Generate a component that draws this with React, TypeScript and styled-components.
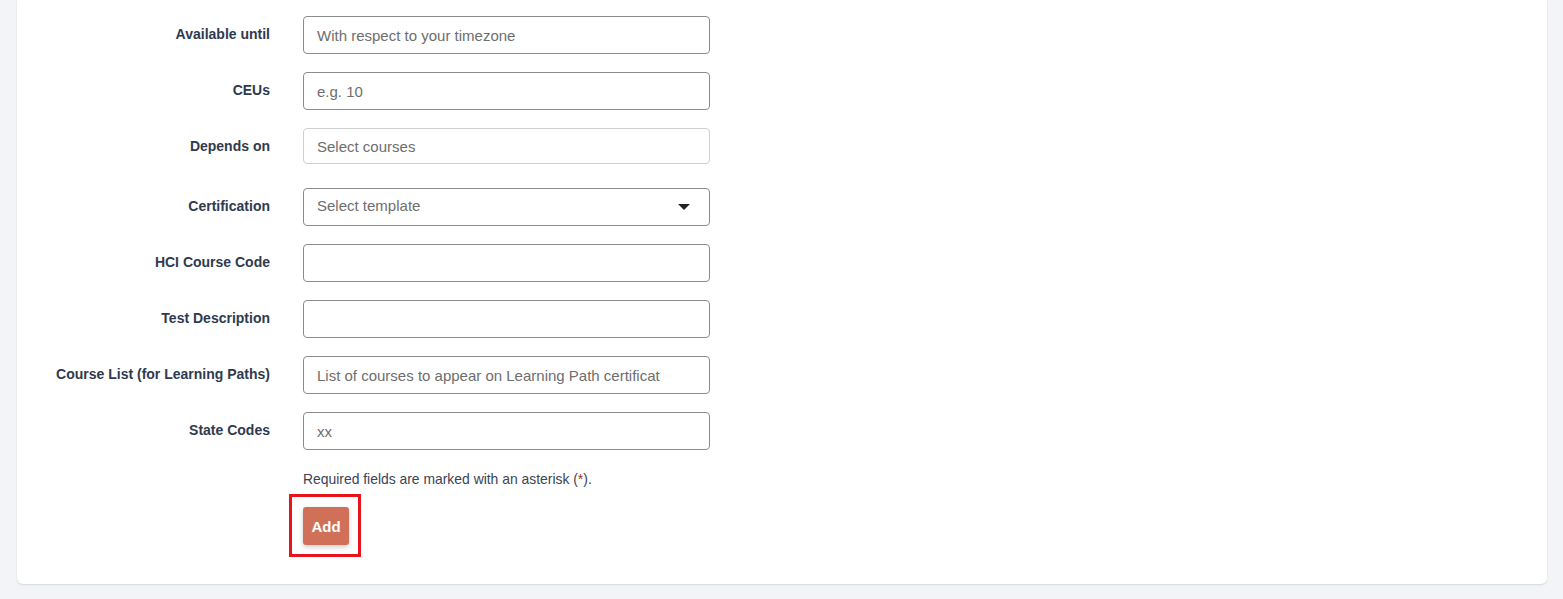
import React from "react";
import styled, { createGlobalStyle } from "styled-components";

const GlobalStyle = createGlobalStyle`
  html, body {
    margin: 0;
    padding: 0;
    background: #f3f4f8;
    font-family: "Liberation Sans", Arial, sans-serif;
  }
  * { box-sizing: border-box; }
`;

const Page = styled.div`
  padding: 0 16px 15px 17px;
`;

const Card = styled.div`
  background: #ffffff;
  border-radius: 0 0 6px 6px;
  box-shadow: 0 1px 2px rgba(0, 0, 0, 0.12);
  padding: 16px 0 39px 0;
`;

const Form = styled.form`
  display: grid;
  grid-template-columns: 253px 407px;
  column-gap: 33px;
`;

const Label = styled.label<{ $pad: number; $gap: number }>`
  text-align: right;
  font-size: 14px;
  font-weight: 700;
  line-height: 20px;
  color: #2f3a4f;
  padding-top: ${(p) => p.$pad}px;
  margin-bottom: ${(p) => p.$gap}px;
`;

const Field = styled.div<{ $gap: number }>`
  margin-bottom: ${(p) => p.$gap}px;
  position: relative;
`;

const TextInput = styled.input<{ $soft?: boolean }>`
  display: block;
  width: 100%;
  height: ${(p) => (p.$soft ? 36 : 38)}px;
  border: 1px solid ${(p) => (p.$soft ? "#cfcfcf" : "#8c8c8c")};
  border-radius: 4px;
  padding: 0 13px;
  font-family: "Liberation Sans", Arial, sans-serif;
  font-size: 15px;
  color: #333;
  background: #fff;
  outline: none;
  &::placeholder {
    color: #6e6e6e;
  }
`;

const SelectBox = styled.div`
  display: flex;
  align-items: center;
  justify-content: space-between;
  height: 38px;
  border: 1px solid #8c8c8c;
  border-radius: 4px;
  padding: 0 19px 2px 13px;
  font-size: 15px;
  line-height: 18px;
  color: #6e6e6e;
  background: #fff;
`;

const Caret = styled.span`
  width: 0;
  height: 0;
  margin-top: 2px;
  border-left: 6px solid transparent;
  border-right: 6px solid transparent;
  border-top: 6px solid #222;
`;

const Note = styled.p`
  grid-column: 2;
  margin: 1px 0 18px 0;
  font-size: 13.9px;
  line-height: 20px;
  color: #3a4456;
`;

const Star = styled.span`
  color: #9a2f1f;
`;

const ButtonCell = styled.div`
  grid-column: 2;
`;

const AddButton = styled.button`
  position: relative;
  width: 46px;
  height: 38px;
  padding: 0;
  border: none;
  border-radius: 3px;
  background: #d07059;
  color: #fff;
  font-family: "Liberation Sans", Arial, sans-serif;
  font-size: 15px;
  font-weight: 700;
  box-shadow: 0 2px 5px rgba(0, 0, 0, 0.2);
  cursor: pointer;
  &::after {
    content: "";
    position: absolute;
    top: -13px;
    bottom: -12px;
    left: -14px;
    right: -12px;
    border: 3px solid #e8141c;
    pointer-events: none;
  }
`;

type Row = {
  label: string;
  placeholder?: string;
  kind?: "text" | "soft" | "select";
};

const rows: Row[] = [
  { label: "Available until", placeholder: "With respect to your timezone" },
  { label: "CEUs", placeholder: "e.g. 10" },
  { label: "Depends on", placeholder: "Select courses", kind: "soft" },
  { label: "Certification", placeholder: "Select template", kind: "select" },
  { label: "HCI Course Code" },
  { label: "Test Description" },
  {
    label: "Course List (for Learning Paths)",
    placeholder: "List of courses to appear on Learning Path certificat",
  },
  { label: "State Codes", placeholder: "xx" },
];

export default function App() {
  return (
    <>
      <GlobalStyle />
      <Page>
        <Card>
          <Form onSubmit={(e) => e.preventDefault()}>
            {rows.map((r) => {
              const gap = r.kind === "soft" ? 24 : 18;
              const pad = r.kind === "soft" ? 8 : 8;
              return (
                <React.Fragment key={r.label}>
                  <Label $pad={pad} $gap={gap}>
                    {r.label}
                  </Label>
                  <Field $gap={gap}>
                    {r.kind === "select" ? (
                      <SelectBox>
                        <span>{r.placeholder}</span>
                        <Caret />
                      </SelectBox>
                    ) : (
                      <TextInput
                        $soft={r.kind === "soft"}
                        placeholder={r.placeholder ?? ""}
                      />
                    )}
                  </Field>
                </React.Fragment>
              );
            })}
            <Note>
              Required fields are marked with an asterisk (<Star>*</Star>).
            </Note>
            <ButtonCell>
              <AddButton type="submit">Add</AddButton>
            </ButtonCell>
          </Form>
        </Card>
      </Page>
    </>
  );
}
